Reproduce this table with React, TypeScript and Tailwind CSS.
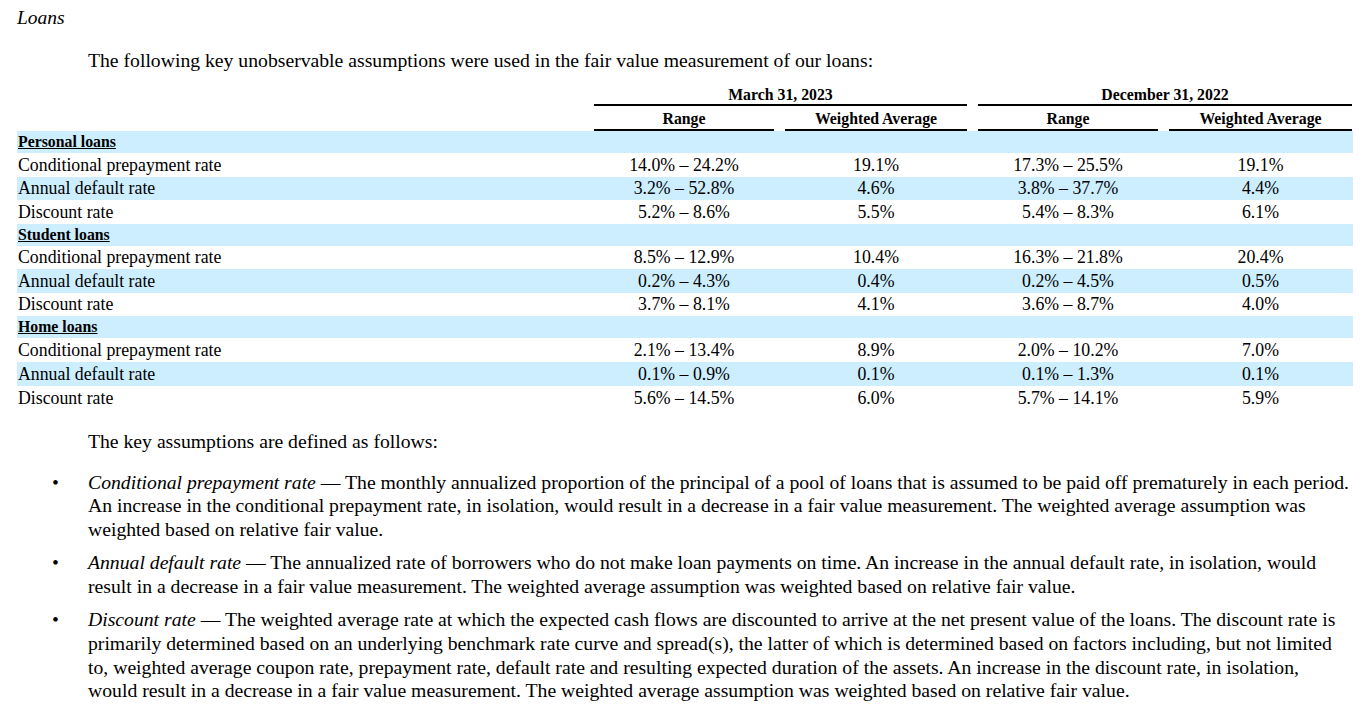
import React from 'react';

type Row = { label: string; section?: boolean; values?: [string, string, string, string] };

const ROWS: Row[] = [
  { label: 'Personal loans', section: true },
  { label: 'Conditional prepayment rate', values: ['14.0% – 24.2%', '19.1%', '17.3% – 25.5%', '19.1%'] },
  { label: 'Annual default rate', values: ['3.2% – 52.8%', '4.6%', '3.8% – 37.7%', '4.4%'] },
  { label: 'Discount rate', values: ['5.2% – 8.6%', '5.5%', '5.4% – 8.3%', '6.1%'] },
  { label: 'Student loans', section: true },
  { label: 'Conditional prepayment rate', values: ['8.5% – 12.9%', '10.4%', '16.3% – 21.8%', '20.4%'] },
  { label: 'Annual default rate', values: ['0.2% – 4.3%', '0.4%', '0.2% – 4.5%', '0.5%'] },
  { label: 'Discount rate', values: ['3.7% – 8.1%', '4.1%', '3.6% – 8.7%', '4.0%'] },
  { label: 'Home loans', section: true },
  { label: 'Conditional prepayment rate', values: ['2.1% – 13.4%', '8.9%', '2.0% – 10.2%', '7.0%'] },
  { label: 'Annual default rate', values: ['0.1% – 0.9%', '0.1%', '0.1% – 1.3%', '0.1%'] },
  { label: 'Discount rate', values: ['5.6% – 14.5%', '6.0%', '5.7% – 14.1%', '5.9%'] },
];

const BULLETS = [
  {
    term: 'Conditional prepayment rate',
    text: 'The monthly annualized proportion of the principal of a pool of loans that is assumed to be paid off prematurely in each period. An increase in the conditional prepayment rate, in isolation, would result in a decrease in a fair value measurement. The weighted average assumption was weighted based on relative fair value.',
  },
  {
    term: 'Annual default rate',
    text: 'The annualized rate of borrowers who do not make loan payments on time. An increase in the annual default rate, in isolation, would result in a decrease in a fair value measurement. The weighted average assumption was weighted based on relative fair value.',
  },
  {
    term: 'Discount rate',
    text: 'The weighted average rate at which the expected cash flows are discounted to arrive at the net present value of the loans. The discount rate is primarily determined based on an underlying benchmark rate curve and spread(s), the latter of which is determined based on factors including, but not limited to, weighted average coupon rate, prepayment rate, default rate and resulting expected duration of the assets. An increase in the discount rate, in isolation, would result in a decrease in a fair value measurement. The weighted average assumption was weighted based on relative fair value.',
  },
];

const App: React.FC = () => {
  return (
    <div className="w-[1368px] h-[708px] overflow-hidden bg-white pl-[17px] pr-[15px] pt-[7px] text-black font-['Liberation_Serif',serif]">
      <p className="italic text-[19.5px] leading-[22px]">Loans</p>

      <p className="mt-[20px] pl-[71px] text-[19.7px] leading-[22px]">
        The following key unobservable assumptions were used in the fair value measurement of our loans:
      </p>

      {/* Assumptions table */}
      <div className="mt-[10px] text-[17.8px]">
        <div className="flex text-[15.8px] font-bold leading-[18px] pt-[5px]">
          <div className="w-[577px]" />
          <div className="w-[373px] text-center border-b-2 border-black">March 31, 2023</div>
          <div className="ml-[11px] w-[374px] text-center border-b-2 border-black">December 31, 2022</div>
        </div>
        <div className="flex text-[15.8px] font-bold leading-[20px] pt-[3px]">
          <div className="w-[577px]" />
          <div className="w-[180px] text-center border-b-2 border-black">Range</div>
          <div className="ml-[11px] w-[182px] text-center border-b-2 border-black">Weighted Average</div>
          <div className="ml-[11px] w-[180px] text-center border-b-2 border-black">Range</div>
          <div className="ml-[11px] w-[183px] text-center border-b-2 border-black">Weighted Average</div>
        </div>

        {ROWS.map((row, i) => (
          <div
            key={i}
            className={
              'flex items-center leading-[20px] ' +
              (row.section ? 'h-[22px] ' : i > 8 ? 'h-[24px] ' : 'h-[23.5px] ') +
              (row.section || i % 4 === 2 ? 'bg-[#cceeff]' : '')
            }
          >
            {row.section ? (
              <div className="w-[577px] pl-[1px] text-[15.8px] font-bold underline">{row.label}</div>
            ) : (
              <>
                <div className="w-[577px] pl-[1px]">{row.label}</div>
                <div className="w-[180px] text-center">{row.values![0]}</div>
                <div className="ml-[11px] w-[182px] text-center">{row.values![1]}</div>
                <div className="ml-[11px] w-[180px] text-center">{row.values![2]}</div>
                <div className="ml-[11px] w-[183px] text-center">{row.values![3]}</div>
              </>
            )}
          </div>
        ))}
      </div>

      <p className="mt-[19.5px] pl-[71px] text-[19.7px] leading-[22px]">The key assumptions are defined as follows:</p>

      <ul className="mt-[19px] space-y-[10px] text-[19.7px] leading-[23.6px]">
        {BULLETS.map((b) => (
          <li key={b.term} className="flex">
            <span className="w-[71px] shrink-0 pl-[35px]">•</span>
            <span>
              <em>{b.term}</em> — {b.text}
            </span>
          </li>
        ))}
      </ul>
    </div>
  );
};

export default App;
